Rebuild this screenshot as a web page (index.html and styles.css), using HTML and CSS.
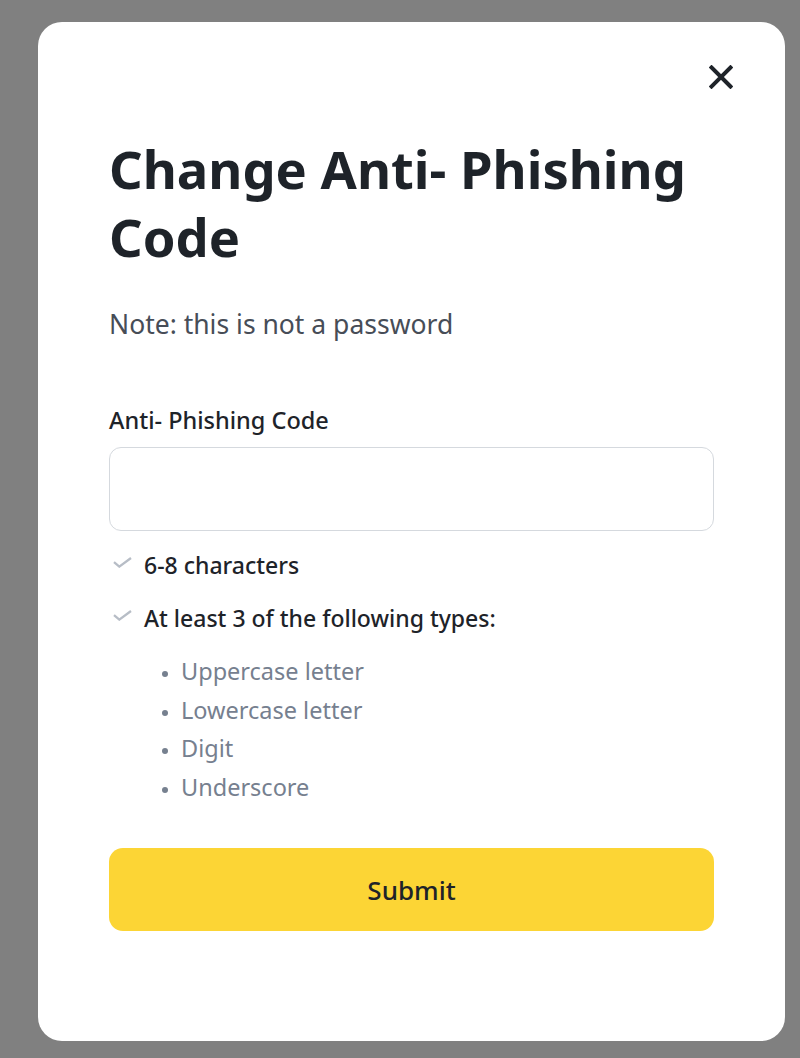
FILE: index.html
```html
<!DOCTYPE html>
<html lang="en">
<head>
<meta charset="utf-8">
<title>Change Anti- Phishing Code</title>
<link rel="stylesheet" href="styles.css">
</head>
<body>
<div class="dialog">
  <div class="dialog-head">
    <button class="close" aria-label="Close">
      <svg width="24" height="24" viewBox="0 0 24 24"><path d="M2.5 2.5L21.5 21.5M21.5 2.5L2.5 21.5" stroke="#1e2329" stroke-width="4" stroke-linecap="square" fill="none"/></svg>
    </button>
  </div>
  <h1 class="title">Change Anti- Phishing Code</h1>
  <p class="note">Note: this is not a password</p>
  <label class="label" for="code">Anti- Phishing Code</label>
  <input class="input" id="code" type="text">
  <ul class="rules">
    <li class="rule">
      <svg class="check" width="19" height="11" viewBox="0 0 19 11"><path d="M1 5.2L6.3 9.6L18 1" stroke="#b7bdc6" stroke-width="2.3" fill="none"/></svg>
      <span>6-8 characters</span>
    </li>
    <li class="rule">
      <svg class="check" width="19" height="11" viewBox="0 0 19 11"><path d="M1 5.2L6.3 9.6L18 1" stroke="#b7bdc6" stroke-width="2.3" fill="none"/></svg>
      <span>At least 3 of the following types:</span>
    </li>
  </ul>
  <ul class="types">
    <li>Uppercase letter</li>
    <li>Lowercase letter</li>
    <li>Digit</li>
    <li>Underscore</li>
  </ul>
  <button class="submit">Submit</button>
</div>
</body>
</html>
```

FILE: styles.css
```css
html, body {
  margin: 0;
  padding: 0;
  background: #808080;
  font-family: "Noto Sans", "Open Sans", sans-serif;
  color: #1e2329;
}
.dialog {
  box-sizing: border-box;
  margin: 22px 0 0 38px;
  width: 747px;
  height: 1019px;
  background: #ffffff;
  border-radius: 24px;
  padding: 0 71px;
}
.dialog-head {
  display: flex;
  justify-content: flex-end;
  padding-top: 43px;
  margin-right: -19px;
}
.close {
  border: 0;
  background: none;
  padding: 0;
  width: 24px;
  height: 24px;
  display: flex;
}
.title {
  margin: 46px 0 0 0;
  font-size: 52.5px;
  line-height: 68px;
  font-weight: 700;
  color: #1e2329;
}
.note {
  margin: 35px 0 0 0;
  font-size: 26.5px;
  line-height: 36px;
  color: #474d57;
}
.label {
  display: block;
  margin-top: 62px;
  font-size: 23.5px;
  line-height: 32px;
  font-weight: 500;
  color: #1e2329;
}
.input {
  display: block;
  box-sizing: border-box;
  width: 100%;
  height: 84px;
  margin-top: 11px;
  border: 1.5px solid #d5d9de;
  border-radius: 12px;
  background: #fff;
  outline: none;
}
.rules {
  list-style: none;
  margin: 18px 0 0 0;
  padding: 0;
  display: flex;
  flex-direction: column;
  gap: 21px;
}
.rule {
  display: flex;
  align-items: flex-start;
  gap: 12px;
  font-size: 23px;
  line-height: 32px;
  font-weight: 500;
  color: #1e2329;
  padding-left: 4px;
}
.check {
  flex: none;
  margin-top: 8px;
}
.types {
  margin: 18px 0 0 0;
  padding-left: 72px;
  font-size: 23.5px;
  line-height: 38.6px;
  color: #76808f;
}
.types li::marker {
  font-size: 18px;
}
.submit {
  display: block;
  width: 100%;
  height: 83px;
  margin-top: 42px;
  border: 0;
  border-radius: 14px;
  background: #fcd535;
  font-family: inherit;
  font-size: 26px;
  font-weight: 500;
  color: #1e2329;
}
```
